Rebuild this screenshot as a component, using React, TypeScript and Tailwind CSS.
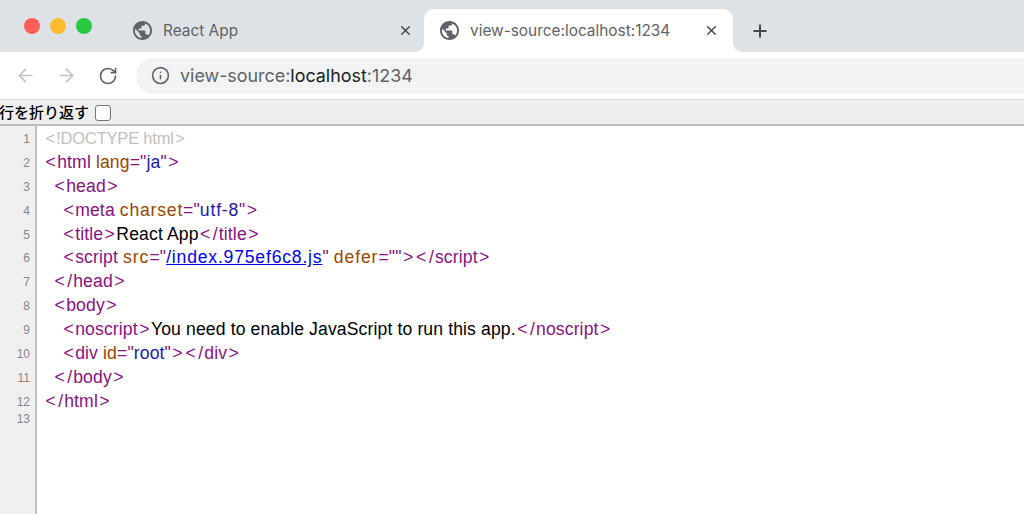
import React from 'react';
import { X, Plus, ArrowLeft, ArrowRight, RotateCw, Info } from 'lucide-react';

const Globe = () => (
  <svg width="19" height="19" viewBox="2 2 20 20" className="shrink-0 fill-[#5f6368]">
    <path d="M12 2C6.48 2 2 6.48 2 12s4.48 10 10 10 10-4.48 10-10S17.52 2 12 2zm-1 17.93c-3.95-.49-7-3.85-7-7.93 0-.62.08-1.21.21-1.79L9 15v1c0 1.1.9 2 2 2v1.93zm6.9-2.54c-.26-.81-1-1.39-1.9-1.39h-1v-3c0-.55-.45-1-1-1H8v-2h2c.55 0 1-.45 1-1V7h2c1.1 0 2-.9 2-2v-.41c2.93 1.19 5 4.06 5 7.41 0 2.08-.8 3.97-2.1 5.39z" />
  </svg>
);

// the reference's angle brackets and slashes sit wider than the letters
const Tag = ({ children }: { children: string }) => (
  <span className="text-[#881280]">
    {children.split(/([<>/])/).map((part, i) =>
      part === '<' || part === '>' ? (
        <span key={i} className="mx-[1.4px]">{part}</span>
      ) : part === '/' ? (
        <span key={i} className="mx-[1px]">{part}</span>
      ) : (
        part
      ),
    )}
  </span>
);
const Attr = ({ children, className = '' }: { children: React.ReactNode; className?: string }) => (
  <span className={`text-[#994500] ${className}`}>{children}</span>
);
const Val = ({ children, className = '' }: { children: React.ReactNode; className?: string }) => (
  <span className={`text-[#1a1aa6] ${className}`}>{children}</span>
);

const lines: { indent: string; body: React.ReactNode }[] = [
  {
    indent: 'pl-0',
    body: <span className="text-[16.5px] tracking-[-0.2px] text-[#c0c0c0]"><span className="mx-[1.4px]">{'<'}</span>!DOCTYPE html<span className="mx-[1.4px]">{'>'}</span></span>,
  },
  { indent: 'pl-0', body: <><Tag>{'<html '}</Tag><Attr>lang</Attr><Tag>{'="'}</Tag><Val>ja</Val><Tag>{'">'}</Tag></> },
  { indent: 'pl-[9px]', body: <Tag>{'<head>'}</Tag> },
  {
    indent: 'pl-[18px]',
    body: <><Tag>{'<meta '}</Tag><Attr className="tracking-[0.8px]">charset</Attr><Tag>{'="'}</Tag><Val className="tracking-[0.8px]">utf-8</Val><Tag>{'">'}</Tag></>,
  },
  { indent: 'pl-[18px]', body: <><Tag>{'<title>'}</Tag>React App<Tag>{'</title>'}</Tag></> },
  {
    indent: 'pl-[18px]',
    body: (
      <>
        <Tag>{'<script '}</Tag><Attr className="tracking-[1px]">src</Attr><Tag>{'="'}</Tag>
        <a className="text-[#0000ee] underline tracking-[0.8px]">/index.975ef6c8.js</a>
        <Tag>{'" '}</Tag><Attr className="tracking-[0.9px]">defer</Attr><Tag>{'="">'}</Tag><Tag>{'</script>'}</Tag>
      </>
    ),
  },
  { indent: 'pl-[9px]', body: <Tag>{'</head>'}</Tag> },
  { indent: 'pl-[9px]', body: <Tag>{'<body>'}</Tag> },
  { indent: 'pl-[18px]', body: <><Tag>{'<noscript>'}</Tag>You need to enable JavaScript to run this app.<Tag>{'</noscript>'}</Tag></> },
  { indent: 'pl-[18px]', body: <><Tag>{'<div '}</Tag><Attr>id</Attr><Tag>{'="'}</Tag><Val>root</Val><Tag>{'">'}</Tag><Tag>{'</div>'}</Tag></> },
  { indent: 'pl-[9px]', body: <Tag>{'</body>'}</Tag> },
  { indent: 'pl-0', body: <Tag>{'</html>'}</Tag> },
];

export default function App() {
  return (
    <div className="flex h-[514px] w-[1024px] flex-col overflow-hidden bg-white font-['Liberation_Sans',sans-serif]">
      {/* tab strip, white behind so the neighbours of the active tab can curve */}
      <div className="flex h-[52px] shrink-0 bg-white">
        <div className="flex h-[52px] w-[424px] shrink-0 rounded-br-[9px] bg-[#dee1e6]">
          <div className="flex w-[133px] shrink-0 items-start gap-[10px] pl-[24px] pt-[18px]">
            <span className="h-4 w-4 rounded-full bg-[#ff5f57]" />
            <span className="h-4 w-4 rounded-full bg-[#febc2e]" />
            <span className="h-4 w-4 rounded-full bg-[#28c840]" />
          </div>
          <div className="flex flex-1 items-center pr-[11px] pt-[9px]">
            <Globe />
            <span className="ml-[11px] flex-1 font-['Inter',sans-serif] text-[15.4px] text-[#5f6368]">React App</span>
            <X size={15} strokeWidth={2.4} className="text-[#45484c]" />
          </div>
        </div>
        <div className="flex h-[52px] w-[309px] shrink-0 flex-col justify-end bg-[#dee1e6]">
          <div className="flex h-[43px] items-center rounded-t-[10px] bg-white pl-[16px] pr-[14px]">
            <Globe />
            <span className="ml-[11px] flex-1 font-['Inter',sans-serif] text-[15.4px] text-[#5f6368]">view-source:localhost:1234</span>
            <X size={15} strokeWidth={2.4} className="text-[#45484c]" />
          </div>
        </div>
        <div className="flex flex-1 items-center rounded-bl-[9px] bg-[#dee1e6] pl-[17px] pt-[9px]">
          <Plus size={20} strokeWidth={2.4} className="text-[#45484c]" />
        </div>
      </div>

      {/* toolbar */}
      <div className="flex h-[48px] shrink-0 items-center border-b border-[#d5d5d5] bg-white pl-[15px]">
        <ArrowLeft size={21} strokeWidth={1.7} className="text-[#bcbfc3]" />
        <ArrowRight size={21} strokeWidth={1.7} className="ml-[20px] text-[#bcbfc3]" />
        <RotateCw size={20} strokeWidth={2} className="ml-[21px] text-[#5f6368]" />
        <div className="ml-[18px] flex h-[36px] flex-1 items-center rounded-l-full bg-[#f1f3f4] pl-[15px]">
          <Info size={19} strokeWidth={2} className="text-[#5f6368]" />
          <span className="ml-[10px] pt-[1px] font-['Inter',sans-serif] text-[17.9px] text-[#5f6368]">
            view-source:<span className="text-[#202124]">localhost</span>:1234
          </span>
        </div>
      </div>

      {/* line wrap bar */}
      <div className="flex h-[26px] shrink-0 items-center gap-[6px] border-b-2 border-[#bdbdbd] bg-[#efefef] text-[15px] text-black">
        <span className="-ml-[1px] font-['Liberation_Sans','Noto_Sans_CJK_JP',sans-serif] font-medium leading-none">行を折り返す</span>
        <span className="mt-[1px] h-[16px] w-[16px] rounded-[3px] border border-[#767676] bg-white" />
      </div>

      {/* source */}
      <div className="flex min-h-0 flex-1">
        <div className="flex w-[37px] shrink-0 flex-col items-end border-r-2 border-[#c0c0c0] bg-[#f0f0f0] pr-[5px] pt-[1px] text-[12px] text-[#8a8585]">
          {lines.map((_, i) => (
            <div key={i} className="h-[23.9px] leading-[24px]">{i + 1}</div>
          ))}
          <div className="-mt-[1px] leading-[12px]">13</div>
        </div>
        <div className="flex-1 pl-[7px] text-[17.6px] tracking-[0.12px] text-black">
          {lines.map((l, i) => (
            <div key={i} className={`h-[23.9px] whitespace-pre leading-[24px] ${l.indent}`}>{l.body}</div>
          ))}
        </div>
      </div>
    </div>
  );
}
